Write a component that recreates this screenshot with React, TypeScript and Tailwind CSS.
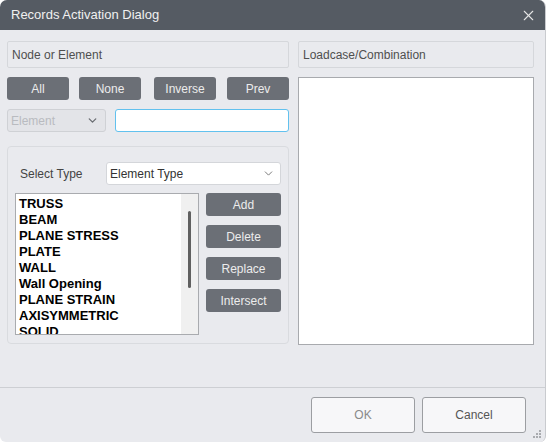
import { ChevronDown, X } from "lucide-react";

const elementTypes = [
  "TRUSS",
  "BEAM",
  "PLANE STRESS",
  "PLATE",
  "WALL",
  "Wall Opening",
  "PLANE STRAIN",
  "AXISYMMETRIC",
  "SOLID",
];

const DarkButton = ({ label, className = "" }: { label: string; className?: string }) => (
  <button
    className={`h-[23px] rounded-[3px] bg-[#6b6f76] text-[12px] text-[#ececec] flex items-center justify-center ${className}`}
  >
    {label}
  </button>
);

const App = () => {
  return (
    <div
      className="w-[546px] h-[442px] bg-[#e9eaee] rounded-t-[7px] rounded-b-[6px] overflow-hidden flex flex-col border-r border-[#c9cbcf]"
      style={{ fontFamily: '"Liberation Sans", "Noto Sans", Arial, sans-serif' }}
    >
      {/* Title bar */}
      <div className="h-[30px] bg-[#555b63] flex items-center justify-between pl-[11px] pr-[8px] shrink-0">
        <span className="text-[13px] text-[#f0f0f0]">Records Activation Dialog</span>
        <X className="w-[17px] h-[17px] text-[#e4e4e4]" strokeWidth={1.5} />
      </div>

      {/* Body */}
      <div className="h-[357px] flex gap-[9px] px-[7px] pt-[11px] shrink-0">
        {/* Left column */}
        <div className="w-[282px] flex flex-col">
          <div className="h-[27px] border border-[#d5d7db] rounded-[2px] flex items-center px-[4px] text-[12px] text-[#4f4f4f]">
            Node or Element
          </div>

          <div className="mt-[9px] flex justify-between">
            <DarkButton label="All" className="w-[62px]" />
            <DarkButton label="None" className="w-[62px] ml-[10px]" />
            <DarkButton label="Inverse" className="w-[62px] ml-[13px]" />
            <DarkButton label="Prev" className="w-[62px] ml-[11px]" />
          </div>

          <div className="mt-[9px] flex gap-[9px]">
            <div className="w-[99px] h-[23px] rounded-[3px] border border-[#cfd1d5] bg-[#e3e4e8] flex items-center justify-between pl-[3px] pr-[6px] text-[12px] text-[#b9bbc0]">
              Element
              <ChevronDown className="w-[13px] h-[13px] text-[#6a6d72]" strokeWidth={2.4} />
            </div>
            <div className="flex-1 h-[23px] rounded-[3px] border border-[#62c1ee] bg-white" />
          </div>

          <div className="mt-[14px] h-[198px] rounded-[4px] border border-[#d9dbdf] px-[7px] pt-[15px]">
            <div className="flex items-center">
              <span className="w-[91px] pl-[5px] text-[12px] text-[#444]">Select Type</span>
              <div className="flex-1 h-[23px] rounded-[3px] border border-[#d4d6da] bg-white flex items-center justify-between pl-[3px] pr-[5px] text-[12px] text-[#333]">
                Element Type
                <ChevronDown className="w-[13px] h-[13px] text-[#777]" strokeWidth={1.8} />
              </div>
            </div>

            <div className="mt-[8px] flex gap-[7px]">
              <div className="w-[184px] h-[142px] border border-[#a9abaf] bg-white flex overflow-hidden">
                <div className="flex-1 pl-[3px] pt-[2px] overflow-hidden">
                  {elementTypes.map((t) => (
                    <div key={t} className="h-[16px] leading-[16px] text-[13px] font-bold text-black whitespace-nowrap">
                      {t}
                    </div>
                  ))}
                </div>
                <div className="w-[17px] bg-[#f0f0f0] flex justify-center pt-[17px]">
                  <div className="w-[3px] h-[77px] bg-[#606060] rounded-full" />
                </div>
              </div>

              <div className="flex-1 flex flex-col gap-[9px]">
                <DarkButton label="Add" />
                <DarkButton label="Delete" />
                <DarkButton label="Replace" />
                <DarkButton label="Intersect" />
              </div>
            </div>
          </div>
        </div>

        {/* Right column */}
        <div className="w-[236px] flex flex-col">
          <div className="h-[27px] border border-[#d5d7db] rounded-[2px] flex items-center px-[4px] text-[12px] text-[#4f4f4f]">
            Loadcase/Combination
          </div>
          <div className="mt-[9px] h-[268px] border border-[#a8aaae] bg-white" />
        </div>
      </div>

      {/* Footer */}
      <div className="flex-1 border-t border-[#cdcfd3] flex justify-end items-start gap-[7px] pt-[9px] pr-[19px] relative">
        <button className="w-[104px] h-[36px] rounded-[3px] border border-[#9c9ea2] bg-[#f7f7f9] text-[12px] text-[#8a8a8a]">
          OK
        </button>
        <button className="w-[104px] h-[36px] rounded-[3px] border border-[#9c9ea2] bg-[#f7f7f9] text-[12px] text-[#555]">
          Cancel
        </button>
        <svg className="absolute right-[4px] bottom-[4px]" width="9" height="9" viewBox="0 0 9 9">
          <rect x="7" y="1" width="2" height="2" fill="#a9abaf" />
          <rect x="4" y="4" width="2" height="2" fill="#a9abaf" />
          <rect x="7" y="4" width="2" height="2" fill="#a9abaf" />
          <rect x="1" y="7" width="2" height="2" fill="#a9abaf" />
          <rect x="4" y="7" width="2" height="2" fill="#a9abaf" />
          <rect x="7" y="7" width="2" height="2" fill="#a9abaf" />
        </svg>
      </div>
    </div>
  );
};

export default App;
